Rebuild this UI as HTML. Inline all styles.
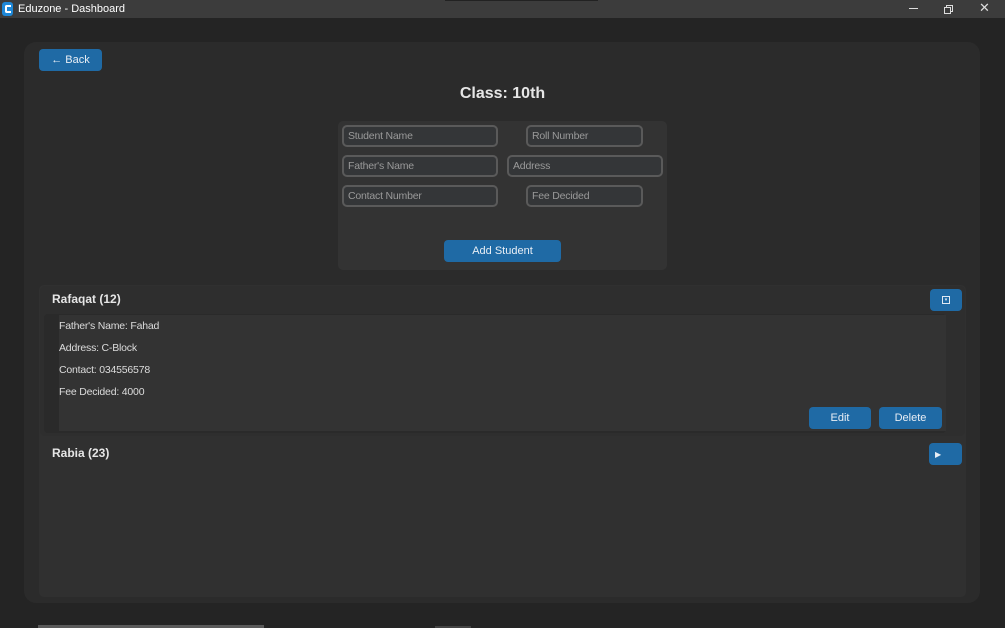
<!DOCTYPE html>
<html><head><meta charset="utf-8"><style>
*{margin:0;padding:0;box-sizing:border-box}
body{width:1005px;height:628px;background:#242424;font-family:"Liberation Sans",sans-serif;overflow:hidden;position:relative;color:#dcdcdc}
.a{position:absolute}
.tb{left:0;top:0;width:1005px;height:18px;background:#3c3c3c}
.btn{background:#1f6aa5;color:#e8eef5;border-radius:4px;font-size:11px;display:flex;align-items:center;justify-content:center}
.in{border:2px solid #5a5a5a;border-radius:5px;background:#343638;color:#9a9a9a;font-size:10.5px;letter-spacing:-0.2px;padding-left:4px;display:flex;align-items:center;height:22px}
.lbl{font-size:10.5px;letter-spacing:-0.2px;color:#dcdcdc}
</style></head><body>
<div class="a tb"></div>
<div class="a" style="left:2px;top:2px;width:11px;height:14px;border-radius:3px;background:#1e88d8"></div>
<div class="a" style="left:5px;top:5px;width:6px;height:8px;border:2px solid #fff;border-right:none;border-radius:2px 0 0 2px"></div>
<div class="a" style="left:18px;top:3px;font-size:11px;color:#fff">Eduzone - Dashboard</div>
<div class="a" style="left:445px;top:0;width:153px;height:1px;background:#222"></div>
<div class="a" style="left:909px;top:8px;width:9px;height:1px;background:#ddd"></div>
<div class="a" style="left:946px;top:5px;width:7px;height:7px;border:1px solid #ddd"></div>
<div class="a" style="left:944px;top:7px;width:7px;height:7px;border:1px solid #ddd;background:#3c3c3c"></div>
<div class="a" style="left:979px;top:0px;font-size:13px;color:#ddd">✕</div>

<div class="a" style="left:24px;top:42px;width:956px;height:561px;background:#2b2b2b;border-radius:12px"></div>
<div class="a btn" style="left:39px;top:49px;width:63px;height:22px;font-size:11px">← Back</div>
<div class="a" style="left:0;width:1005px;top:85px;text-align:center;font-size:16px;font-weight:bold;color:#e6e6e6">Class: 10th</div>

<div class="a" style="left:338px;top:121px;width:329px;height:149px;background:#333333;border-radius:5px"></div>
<div class="a in" style="left:342px;top:125px;width:156px">Student Name</div>
<div class="a in" style="left:526px;top:125px;width:117px">Roll Number</div>
<div class="a in" style="left:342px;top:155px;width:156px">Father's Name</div>
<div class="a in" style="left:507px;top:155px;width:156px">Address</div>
<div class="a in" style="left:342px;top:185px;width:156px">Contact Number</div>
<div class="a in" style="left:526px;top:185px;width:117px">Fee Decided</div>
<div class="a btn" style="left:444px;top:240px;width:117px;height:22px">Add Student</div>

<div class="a" style="left:39px;top:285px;width:927px;height:312px;background:#303030;border-radius:5px"></div>
<div class="a" style="left:40px;top:286px;width:925px;height:150px;background:#2e2e2e;border-radius:5px"></div>
<div class="a" style="left:52px;top:292px;font-size:12px;font-weight:bold;color:#e6e6e6">Rafaqat (12)</div>
<div class="a btn" style="left:930px;top:289px;width:32px;height:22px"><span style="width:8px;height:8px;border:1px solid #dfe9f3;display:block;font-size:5px;line-height:6px;text-align:center">▾</span></div>
<div class="a" style="left:44px;top:314px;width:902px;height:119px;background:#2a2a2a;border-radius:4px"></div>
<div class="a" style="left:59px;top:315px;width:887px;height:116px;background:#333333"></div>
<div class="a lbl" style="left:59px;top:320px">Father's Name: Fahad</div>
<div class="a lbl" style="left:59px;top:342px">Address: C-Block</div>
<div class="a lbl" style="left:59px;top:364px">Contact: 034556578</div>
<div class="a lbl" style="left:59px;top:386px">Fee Decided: 4000</div>
<div class="a btn" style="left:809px;top:407px;width:62px;height:22px">Edit</div>
<div class="a btn" style="left:879px;top:407px;width:63px;height:22px">Delete</div>
<div class="a" style="left:52px;top:446px;font-size:12px;font-weight:bold;color:#e6e6e6">Rabia (23)</div>
<div class="a btn" style="left:929px;top:443px;width:33px;height:22px;justify-content:flex-start;padding-left:6px;font-size:8px">▶</div>

<div class="a" style="left:38px;top:625px;width:226px;height:3px;background:#5a5a5a"></div>
<div class="a" style="left:435px;top:626px;width:36px;height:2px;background:#444"></div>
</body></html>
